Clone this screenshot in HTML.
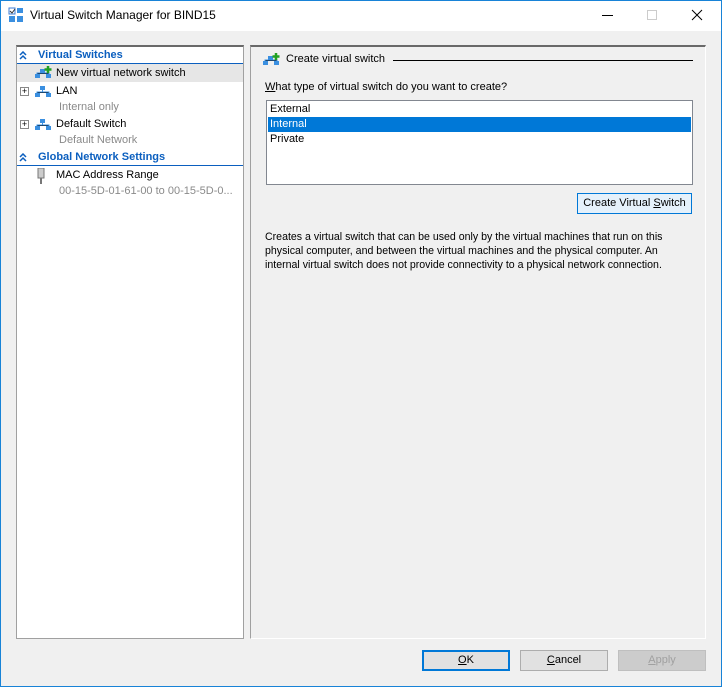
<!DOCTYPE html>
<html><head><style>
*{margin:0;padding:0;box-sizing:border-box}
body{width:722px;height:687px;background:#f0f0f0;font-family:"Liberation Sans",sans-serif;font-size:11px;color:#000;position:relative;overflow:hidden}
.a{position:absolute;white-space:nowrap}
.title{left:0;top:0;width:722px;height:31px;background:#fff}
.frame{left:0;top:0;width:722px;height:687px;border:1px solid #1883d7}
.panel{background:#fff;border:1px solid #a0a0a0;border-top:2px solid #696969}
.hdr{color:#0b5fbf;font-weight:bold;font-size:11px}
.gray{color:#8a8a8a}
.btn{border:1px solid #adadad;background:#e1e1e1;text-align:center;line-height:19px}
</style></head><body>
<div class="a title"></div>
<div class="a frame"></div>
<svg class="a" style="left:8px;top:7px" width="16" height="16" viewBox="0 0 16 16"><rect x="1" y="1" width="6" height="6" fill="none" stroke="#3a7bd5"/><path d="M2 4l2 2 3-4" stroke="#333" fill="none"/><rect x="9" y="1" width="6" height="5" fill="#3a8fe0"/><rect x="1" y="9" width="6" height="6" fill="#3a8fe0"/><rect x="9" y="9" width="6" height="6" fill="#3a8fe0"/></svg>
<div class="a" style="left:30px;top:8px;font-size:12px">Virtual Switch Manager for BIND15</div>
<div class="a" style="left:602px;top:15px;width:11px;height:1px;background:#000"></div>
<div class="a" style="left:647px;top:10px;width:10px;height:10px;border:1px solid #ccc"></div>
<svg class="a" style="left:691px;top:9px" width="12" height="12"><path d="M1 1L11 11M11 1L1 11" stroke="#000" stroke-width="1"/></svg>

<div class="a panel" style="left:16px;top:45px;width:228px;height:594px"></div>
<svg class="a" style="left:19px;top:51px" width="8" height="9"><path d="M1 4l3-3 3 3M1 8l3-3 3 3" stroke="#0b5fbf" stroke-width="1.5" fill="none"/></svg>
<div class="a hdr" style="left:38px;top:49px">Virtual Switches</div>
<div class="a" style="left:17px;top:63px;width:226px;height:1px;background:#0b5fbf"></div>
<div class="a" style="left:17px;top:64px;width:226px;height:18px;background:#e6e6e6"></div>
<svg class="a" style="left:35px;top:66px" width="17" height="13"><rect x="0" y="8" width="5" height="4" fill="#3a8fe0"/><rect x="11" y="8" width="5" height="4" fill="#3a8fe0"/><rect x="5" y="3" width="5" height="4" fill="#3a8fe0"/><path d="M2 8V7h12v1M7 7V6" stroke="#3a8fe0"/><path d="M13 0v7M9.5 3.5h7" stroke="#22a022" stroke-width="2.5"/></svg>
<div class="a" style="left:56px;top:67px">New virtual network switch</div>
<div class="a" style="left:20px;top:87px;width:9px;height:9px;border:1px solid #888;font-size:9px;line-height:7px;text-align:center">+</div>
<svg class="a" style="left:35px;top:85px" width="17" height="13"><rect x="0" y="8" width="5" height="4" fill="#3a8fe0"/><rect x="11" y="8" width="5" height="4" fill="#3a8fe0"/><rect x="5" y="1" width="5" height="4" fill="#3a8fe0"/><path d="M2 8V7h12v1M7.5 5v2" stroke="#3a8fe0"/></svg>
<div class="a" style="left:56px;top:85px">LAN</div>
<div class="a gray" style="left:59px;top:101px">Internal only</div>
<div class="a" style="left:20px;top:120px;width:9px;height:9px;border:1px solid #888;font-size:9px;line-height:7px;text-align:center">+</div>
<svg class="a" style="left:35px;top:118px" width="17" height="13"><rect x="0" y="8" width="5" height="4" fill="#3a8fe0"/><rect x="11" y="8" width="5" height="4" fill="#3a8fe0"/><rect x="5" y="1" width="5" height="4" fill="#3a8fe0"/><path d="M2 8V7h12v1M7.5 5v2" stroke="#3a8fe0"/></svg>
<div class="a" style="left:56px;top:118px">Default Switch</div>
<div class="a gray" style="left:59px;top:134px">Default Network</div>
<svg class="a" style="left:19px;top:153px" width="8" height="9"><path d="M1 4l3-3 3 3M1 8l3-3 3 3" stroke="#0b5fbf" stroke-width="1.5" fill="none"/></svg>
<div class="a hdr" style="left:38px;top:151px">Global Network Settings</div>
<div class="a" style="left:17px;top:165px;width:226px;height:1px;background:#0b5fbf"></div>
<svg class="a" style="left:37px;top:168px" width="8" height="17"><rect x="1" y="0" width="6" height="10" fill="#ccc" stroke="#777"/><rect x="3" y="10" width="2" height="6" fill="#777"/></svg>
<div class="a" style="left:56px;top:169px">MAC Address Range</div>
<div class="a gray" style="left:59px;top:185px">00-15-5D-01-61-00 to 00-15-5D-0...</div>

<div class="a" style="left:250px;top:45px;width:456px;height:594px;border:1px solid #a0a0a0;border-top:2px solid #696969;border-right-color:#fff;border-bottom-color:#fff"></div>
<svg class="a" style="left:263px;top:53px" width="17" height="13"><rect x="0" y="8" width="5" height="4" fill="#3a8fe0"/><rect x="11" y="8" width="5" height="4" fill="#3a8fe0"/><rect x="5" y="3" width="5" height="4" fill="#3a8fe0"/><path d="M2 8V7h12v1M7 7V6" stroke="#3a8fe0"/><path d="M13 0v7M9.5 3.5h7" stroke="#22a022" stroke-width="2.5"/></svg>
<div class="a" style="left:286px;top:53px">Create virtual switch</div>
<div class="a" style="left:393px;top:60px;width:300px;height:1px;background:#000"></div>
<div class="a" style="left:265px;top:81px"><u>W</u>hat type of virtual switch do you want to create?</div>
<div class="a" style="left:266px;top:100px;width:427px;height:85px;background:#fff;border:1px solid #828790"></div>
<div class="a" style="left:270px;top:103px">External</div>
<div class="a" style="left:268px;top:117px;width:423px;height:15px;background:#0078d7"></div>
<div class="a" style="left:270px;top:118px;color:#fff">Internal</div>
<div class="a" style="left:270px;top:133px">Private</div>
<div class="a btn" style="left:577px;top:193px;width:115px;height:21px;border-color:#0078d7;background:#e5f1fb">Create Virtual <u>S</u>witch</div>
<div class="a" style="left:265px;top:230px;line-height:14px;font-size:10.6px">Creates a virtual switch that can be used only by the virtual machines that run on this<br>physical computer, and between the virtual machines and the physical computer. An<br>internal virtual switch does not provide connectivity to a physical network connection.</div>

<div class="a btn" style="left:422px;top:650px;width:88px;height:21px;border:2px solid #0078d7;line-height:17px"><u>O</u>K</div>
<div class="a btn" style="left:520px;top:650px;width:88px;height:21px"><u>C</u>ancel</div>
<div class="a btn" style="left:618px;top:650px;width:88px;height:21px;background:#cccccc;border-color:#bfbfbf;color:#a0a0a0"><u>A</u>pply</div>
</body></html>
